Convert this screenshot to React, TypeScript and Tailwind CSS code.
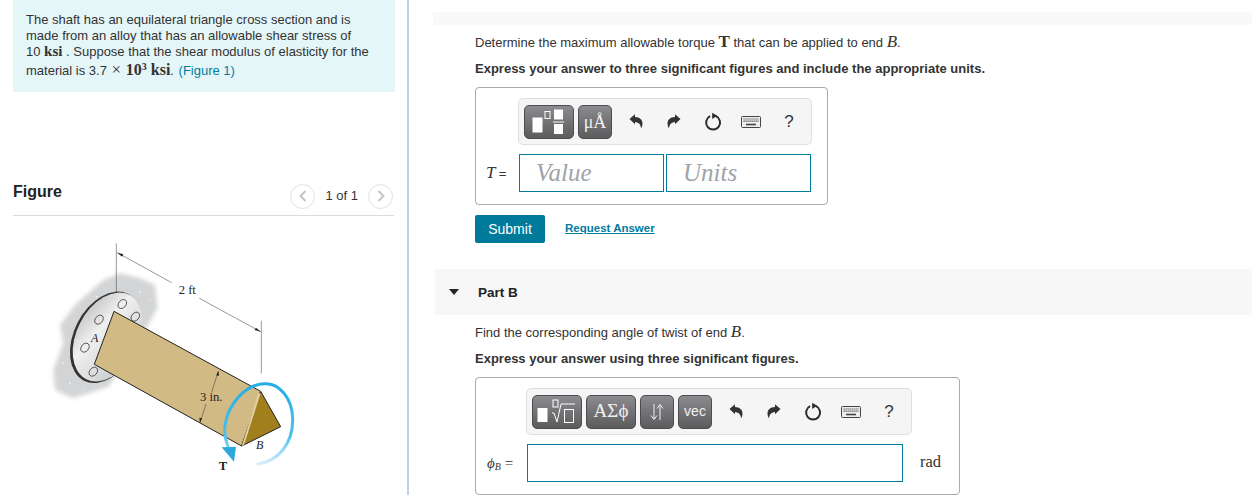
const sans = "font-['Liberation_Sans',Arial,sans-serif]";
const serif = "font-['Liberation_Serif','Times_New_Roman',serif]";

function TplFrac() {
  return (
    <svg width="34" height="26" viewBox="0 0 34 26">
      <rect x="0.5" y="8.5" width="10" height="15" fill="#fff" />
      <rect x="13" y="2.5" width="5" height="7" fill="none" stroke="#fff" strokeWidth="1" />
      <rect x="22" y="0.5" width="9" height="10" fill="#fff" />
      <rect x="21" y="12.5" width="11" height="1" fill="#fff" />
      <rect x="22" y="15" width="9" height="10" fill="#fff" />
    </svg>
  );
}

function TplRoot() {
  return (
    <svg width="40" height="26" viewBox="0 0 40 26">
      <rect x="0.5" y="9" width="10" height="14" fill="#fff" />
      <rect x="16" y="1" width="5" height="7" fill="none" stroke="#fff" strokeWidth="1" />
      <path d="M15 14 L17 14 L20 23 L24 5 H38" fill="none" stroke="#fff" strokeWidth="1" />
      <rect x="27.5" y="10.5" width="9" height="13" fill="none" stroke="#fff" strokeWidth="1" />
    </svg>
  );
}

function Arrows() {
  return (
    <svg width="14" height="18" viewBox="0 0 14 18">
      <g fill="none" stroke="#f1f1f1" strokeWidth="1">
        <path d="M4 1 V16 M1 12.5 L4 16.5 L7 12.5" />
        <path d="M10 17 V2 M7 5.5 L10 1.5 L13 5.5" />
      </g>
    </svg>
  );
}

function Btn({ w, children }: { w: string; children: React.ReactNode }) {
  return (
    <div
      className={`${w} h-[34px] flex items-center justify-center rounded-[5px] border border-[#4d4d4f] bg-gradient-to-b from-[#8c8c90] to-[#5c5c5e] text-[#f1f1f1]`}
    >
      {children}
    </div>
  );
}

function Undo({ flip }: { flip?: boolean }) {
  return (
    <svg width="14" height="17" viewBox="0 0 14 16" className={flip ? "-scale-x-100" : ""}>
      <path
        d="M0.5 5.5 L6 0.8 V3.6 C10.5 3.6 13.6 6.4 13.5 10.2 C13.5 11.8 13 13.4 12 15 C12 11.6 10 8.6 6 8.4 V10.8 Z"
        fill="#333"
      />
    </svg>
  );
}

function Reload() {
  return (
    <svg width="18" height="19" viewBox="0 0 18 19">
      <path d="M6.2 4.2 A7 7 0 1 0 12 4.2" fill="none" stroke="#2b2b2b" strokeWidth="2" />
      <path d="M8.2 0.8 L13.2 3.8 L8.2 7 Z" fill="#2b2b2b" />
    </svg>
  );
}

function Keyboard() {
  return (
    <svg width="20" height="12" viewBox="0 0 20 12">
      <rect x="0.5" y="0.5" width="19" height="11" rx="1" fill="#eee" stroke="#444" />
      <path d="M2.5 3 H17.5 M2.5 5.2 H17.5" stroke="#444" strokeWidth="1.2" strokeDasharray="1.2 0.8" />
      <path d="M5 8.5 H15" stroke="#444" strokeWidth="1.6" />
    </svg>
  );
}

function Tools() {
  return (
    <>
      <div className="w-[38px] flex justify-center"><Undo /></div>
      <div className="w-[38px] flex justify-center"><Undo flip /></div>
      <div className="w-[39px] flex justify-center"><Reload /></div>
      <div className="w-[38px] flex justify-center"><Keyboard /></div>
      <div className={`w-[38px] text-center text-[17px] text-[#333] ${sans}`}>?</div>
    </>
  );
}

function Shaft() {
  return (
    <svg width="270" height="265" viewBox="0 0 810 795" className="block">
      <defs>
        <linearGradient id="flange" x1="0" y1="0" x2="1" y2="0.4">
          <stop offset="0" stopColor="#b9bbbe" />
          <stop offset="0.45" stopColor="#f0f0f0" />
          <stop offset="1" stopColor="#cfd1d3" />
        </linearGradient>
        <linearGradient id="blue" x1="0" y1="0" x2="0" y2="1">
          <stop offset="0" stopColor="#25aee6" />
          <stop offset="0.65" stopColor="#4fc0ec" />
          <stop offset="1" stopColor="#d5f0fa" />
        </linearGradient>
        <filter id="soft"><feGaussianBlur stdDeviation="6" /></filter>
      </defs>
      <path
        d="M60 285 L105 225 L190 150 L240 130 L300 145 L345 165 L352 235 L310 310 L205 470 L100 505 L45 480 L40 420 L70 340 Z"
        fill="#d3d4d6"
        filter="url(#soft)"
      />
      <g fill="#f1f1f2">
        <circle cx="120" cy="270" r="3" /><circle cx="170" cy="200" r="3" /><circle cx="300" cy="185" r="3" />
        <circle cx="90" cy="460" r="3" /><circle cx="70" cy="400" r="3" /><circle cx="330" cy="210" r="2" />
        <circle cx="240" cy="160" r="2" /><circle cx="85" cy="330" r="2" /><circle cx="130" cy="480" r="2" />
      </g>
      <path d="M229 40 V190" stroke="#333" strokeWidth="1.5" />
      <ellipse cx="198" cy="322" rx="96" ry="146" transform="rotate(27 198 322)" fill="#333" />
      <ellipse cx="203" cy="321" rx="93" ry="142" transform="rotate(27 203 321)" fill="url(#flange)" />
      <g fill="none" stroke="#444" strokeWidth="2.5">
        <ellipse cx="177" cy="269" rx="11" ry="15" transform="rotate(40 177 269)" />
        <ellipse cx="247" cy="222" rx="11" ry="15" transform="rotate(40 247 222)" />
        <ellipse cx="286" cy="260" rx="11" ry="15" transform="rotate(40 286 260)" />
        <ellipse cx="135" cy="353" rx="11" ry="15" transform="rotate(40 135 353)" />
        <ellipse cx="160" cy="425" rx="11" ry="15" transform="rotate(40 160 425)" />
      </g>
      <text x="153" y="337" fontFamily="Liberation Serif" fontStyle="italic" fontSize="36" fill="#222">A</text>
      <polygon points="222,244 662,484 605,648 163,403" fill="#d2ba85" stroke="#222" strokeWidth="3" strokeLinejoin="round" />
      <polygon points="662,484 722,590 605,648" fill="#a07f1c" stroke="#222" strokeWidth="3" strokeLinejoin="round" />
      <polygon points="662,490 612,645 605,648 655,490" fill="#e3cfa2" />
      <g stroke="#333" strokeWidth="1.5" fill="none">
        <path d="M664 272 V430" />
        <path d="M232 68 L395 158" />
        <path d="M478 205 L662 305" />
        <path d="M535 423 L515 487" />
        <path d="M498 522 L480 578" />
      </g>
      <g fill="#222">
        <polygon points="232,68 250,73 246,80" />
        <polygon points="662,305 644,300 648,293" />
        <polygon points="535,423 537,438 529,436" />
        <polygon points="480,578 478,563 486,565" />
      </g>
      <text x="416" y="192" fontFamily="Liberation Serif" fontSize="38" fill="#222">2 ft</text>
      <text x="480" y="512" fontFamily="Liberation Serif" fontSize="38" fill="#222">3 in.</text>
      <text x="648" y="658" fontFamily="Liberation Serif" fontStyle="italic" fontSize="36" fill="#222">B</text>
      <text x="536" y="720" fontFamily="Liberation Serif" fontWeight="700" fontSize="38" fill="#222">T</text>
      <path
        d="M650 703 C715 695 760 640 758 565 C756 500 715 462 680 461 C620 458 565 520 555 585 C551 615 558 635 566 655"
        fill="none"
        stroke="url(#blue)"
        strokeWidth="9"
      />
      <polygon points="545,652 588,650 582,695" fill="#2ba9dd" />
    </svg>
  );
}

function Nav({ dir }: { dir: "l" | "r" }) {
  return (
    <div className="w-[25px] h-[25px] rounded-full border border-[#e2e2e2] flex items-center justify-center">
      <svg width="8" height="12" viewBox="0 0 8 12">
        <path d={dir === "l" ? "M6.5 1 L1.5 6 L6.5 11" : "M1.5 1 L6.5 6 L1.5 11"} fill="none" stroke="#c4c4c4" strokeWidth="2" />
      </svg>
    </div>
  );
}

export default function App() {
  return (
    <div className={`w-[1252px] h-[495px] overflow-hidden flex bg-white text-[#333] ${sans}`}>
      <div className="w-[409px] shrink-0 h-full border-r-2 border-[#c3d1de] pl-[13px] pr-[12px]">
        <div className="w-[382px] h-[92px] bg-[#e5f6f8] pl-[13px] pt-[12px] text-[13px] leading-[16px]">
          <div className="h-[16px]">The shaft has an equilateral triangle cross section and is</div>
          <div className="h-[16px]">made from an alloy that has an allowable shear stress of</div>
          <div className="h-[16px]">
            10 <span className={`${serif} font-bold text-[15px] leading-[0]`}>ksi</span> . Suppose that the shear modulus of elasticity for the
          </div>
          <div className="h-[16px] mt-[3px]">
            material is 3.7 <span className={`${serif} text-[17px] mx-[1px] leading-[0]`}>×</span>{" "}
            <span className={`${serif} font-bold text-[16px] leading-[0]`}>
              10<sup className="text-[10px] leading-[0]">3</sup> ksi
            </span>
            . <span className="text-[#007c9e] ml-[1px]">(Figure 1)</span>
          </div>
        </div>
        <div className="w-[381px] mt-[77px] h-[47px] flex items-center justify-between border-b border-[#dcdcdc]">
          <div className="text-[16px] font-bold text-[#222]">Figure</div>
          <div className="flex items-center gap-[10px] text-[13px] mt-[8px] pr-[1px]">
            <Nav dir="l" />
            <span>1 of 1</span>
            <Nav dir="r" />
          </div>
        </div>
        <div className="ml-[27px] mt-[14px]">
          <Shaft />
        </div>
      </div>

      <div className="flex-1 min-w-0 pl-[24px]">
        <div className="mt-[12px] h-[13px] bg-[#f9f9f9]" />
        <div className="pl-[42px]">
          <div className="mt-[8px] h-[18px] leading-[18px] text-[13px]">
            Determine the maximum allowable torque <span className={`${serif} font-bold text-[17px]`}>T</span> that can be applied to end{" "}
            <span className={`${serif} italic text-[17px]`}>B</span>.
          </div>
          <div className="mt-[9px] h-[18px] leading-[18px] text-[13px] font-bold">
            Express your answer to three significant figures and include the appropriate units.
          </div>

          <div className="mt-[9px] w-[353px] h-[118px] border border-[#aaa] rounded-[4px] pt-[10px] pl-[42px]">
            <div className="w-[294px] h-[47px] bg-[#f5f5f5] border border-[#dfdfdf] rounded-[5px] flex items-center pl-[5px]">
              <Btn w="w-[50px]"><TplFrac /></Btn>
              <div className="w-[4px]" />
              <Btn w="w-[34px]"><span className={`${serif} text-[18px] mt-[2px]`}>μÅ</span></Btn>
              <div className="w-[5px]" />
              <Tools />
            </div>
            <div className="mt-[9px] flex items-center -ml-[32px]">
              <div className={`w-[33px] text-[13px] whitespace-nowrap ${serif}`}>
                <span className="italic text-[17px]">T</span> <span className={sans}>=</span>
              </div>
              <div className={`w-[145px] h-[38px] border border-[#007c9e] pl-[16px] flex items-center ${serif} italic text-[25px] text-[#a0a3a8]`}>Value</div>
              <div className={`ml-[2px] w-[145px] h-[38px] border border-[#007c9e] pl-[16px] flex items-center ${serif} italic text-[25px] text-[#a0a3a8]`}>Units</div>
            </div>
          </div>

          <div className="mt-[10px] flex items-center">
            <div className="w-[70px] h-[28px] bg-[#007a9b] rounded-[2px] text-white text-[14px] flex items-center justify-center">Submit</div>
            <div className="ml-[20px] text-[11.5px] font-bold text-[#007c9e] underline">Request Answer</div>
          </div>
        </div>

        <div className="mt-[26px] h-[46px] ml-[2px] bg-[#f7f7f7] flex items-center pl-[14px]">
          <div className="w-0 h-0 border-l-[5px] border-r-[5px] border-t-[6px] border-l-transparent border-r-transparent border-t-[#222]" />
          <div className="ml-[19px] mt-[2px] text-[13.5px] font-bold text-[#222]">Part B</div>
        </div>

        <div className="pl-[42px]">
          <div className="mt-[8px] h-[18px] leading-[18px] text-[13px]">
            Find the corresponding angle of twist of end <span className={`${serif} italic text-[17px]`}>B</span>.
          </div>
          <div className="mt-[9px] h-[18px] leading-[18px] text-[13px] font-bold">Express your answer using three significant figures.</div>

          <div className="mt-[9px] w-[485px] h-[118px] border border-[#aaa] rounded-[4px] pt-[10px] pl-[50px]">
            <div className="w-[386px] h-[47px] bg-[#f5f5f5] border border-[#dfdfdf] rounded-[5px] flex items-center pl-[5px]">
              <Btn w="w-[50px]"><TplRoot /></Btn>
              <div className="w-[4px]" />
              <Btn w="w-[50px]"><span className={`${serif} text-[19px]`}>ΑΣϕ</span></Btn>
              <div className="w-[4px]" />
              <Btn w="w-[34px]"><Arrows /></Btn>
              <div className="w-[4px]" />
              <Btn w="w-[34px]"><span className="text-[14px]">vec</span></Btn>
              <div className="w-[5px]" />
              <Tools />
            </div>
            <div className="mt-[9px] flex items-center -ml-[39px]">
              <div className={`w-[40px] text-[15px] whitespace-nowrap ${serif}`}>
                <span className="italic">ϕ<sub className="text-[10px]">B</sub></span> =
              </div>
              <div className="w-[376px] h-[38px] border border-[#007c9e]" />
              <div className={`ml-[17px] -mt-[2px] text-[16.5px] ${serif}`}>rad</div>
            </div>
          </div>
        </div>
      </div>
    </div>
  );
}
